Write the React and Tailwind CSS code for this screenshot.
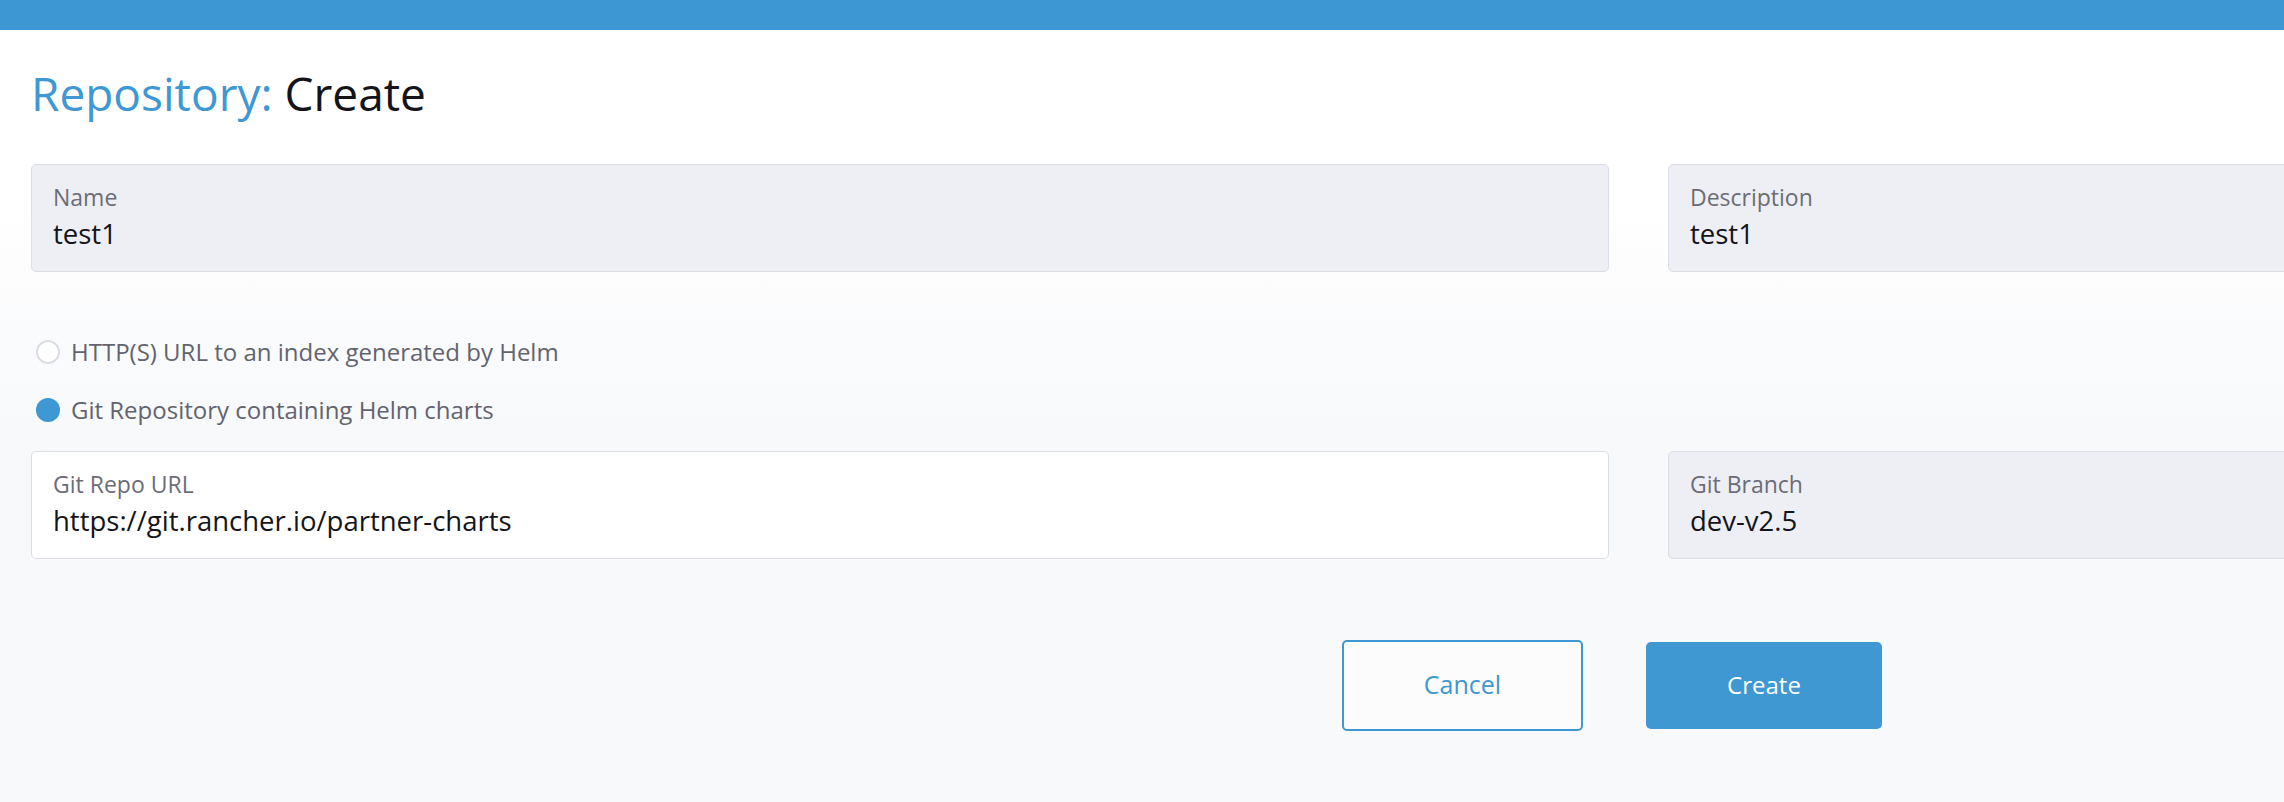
export default function App() {
  return (
    <div className="w-[2284px] h-[802px] overflow-hidden font-['Open_Sans','Noto_Sans',sans-serif] bg-[linear-gradient(to_bottom,#ffffff_200px,#f8f9fb_420px)]">
      <div className="h-[30px] bg-[#3d97d3]" />
      <div className="px-[31px]">
        <h1 className="mt-[40px] h-[46px] text-[46px] leading-[46px] font-normal text-[#141419]">
          <span className="text-[#3d98d3]">Repository:</span> Create
        </h1>

        <div className="mt-[48px] flex gap-[59px]">
          <Field label="Name" value="test1" filled />
          <Field label="Description" value="test1" filled />
        </div>

        <div className="mt-[68px] flex flex-col gap-[34px]">
          <Radio label="HTTP(S) URL to an index generated by Helm" />
          <Radio label="Git Repository containing Helm charts" checked />
        </div>

        <div className="mt-[29px] flex gap-[59px]">
          <Field label="Git Repo URL" value="https://git.rancher.io/partner-charts" />
          <Field label="Git Branch" value="dev-v2.5" filled />
        </div>

        <div className="mt-[81px] w-[1851px] flex items-center justify-end gap-[63px]">
          <button className="w-[241px] h-[91px] rounded-[5px] border-2 border-[#3d98d3] bg-[#fcfcfd] pb-[2px] text-[25px] text-[#3d98d3]">
            Cancel
          </button>
          <button className="w-[236px] h-[87px] rounded-[5px] bg-[#4098d2] pb-[2px] text-[24px] text-white">
            Create
          </button>
        </div>
      </div>
    </div>
  );
}

function Field({ label, value, filled }) {
  return (
    <div
      className={
        filled
          ? 'w-[1578px] shrink-0 rounded-[5px] border border-[#dcdee7] bg-[#eeeff4] pl-[21px] pt-[21px] pb-[24px]'
          : 'w-[1578px] shrink-0 rounded-[5px] border border-[#dcdee7] bg-white pl-[21px] pt-[21px] pb-[24px]'
      }
    >
      <div className="h-[23px] text-[23px] leading-[23px] text-[#6c6c76]">{label}</div>
      <div className="mt-[11px] h-[27px] text-[27.5px] leading-[27px] text-[#141419]">{value}</div>
    </div>
  );
}

function Radio({ label, checked }) {
  return (
    <div className="ml-[5px] flex h-[24px] items-center gap-[11px]">
      {checked ? (
        <span className="w-[24px] h-[24px] rounded-full bg-[#3d98d3]" />
      ) : (
        <span className="w-[24px] h-[24px] rounded-full border-2 border-[#dcdee7] bg-white" />
      )}
      <span className="text-[24px] leading-[24px] text-[#63636e]">{label}</span>
    </div>
  );
}
